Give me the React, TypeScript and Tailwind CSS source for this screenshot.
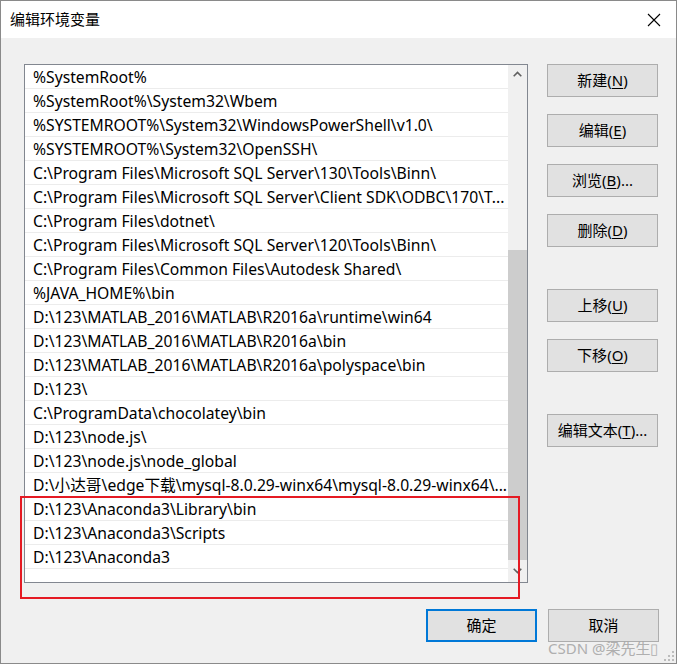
import React from "react";

// the two long entries are shown already shortened, as the dialog draws them
const paths = [
  "%SystemRoot%",
  "%SystemRoot%\\System32\\Wbem",
  "%SYSTEMROOT%\\System32\\WindowsPowerShell\\v1.0\\",
  "%SYSTEMROOT%\\System32\\OpenSSH\\",
  "C:\\Program Files\\Microsoft SQL Server\\130\\Tools\\Binn\\",
  "C:\\Program Files\\Microsoft SQL Server\\Client SDK\\ODBC\\170\\T...",
  "C:\\Program Files\\dotnet\\",
  "C:\\Program Files\\Microsoft SQL Server\\120\\Tools\\Binn\\",
  "C:\\Program Files\\Common Files\\Autodesk Shared\\",
  "%JAVA_HOME%\\bin",
  "D:\\123\\MATLAB_2016\\MATLAB\\R2016a\\runtime\\win64",
  "D:\\123\\MATLAB_2016\\MATLAB\\R2016a\\bin",
  "D:\\123\\MATLAB_2016\\MATLAB\\R2016a\\polyspace\\bin",
  "D:\\123\\",
  "C:\\ProgramData\\chocolatey\\bin",
  "D:\\123\\node.js\\",
  "D:\\123\\node.js\\node_global",
  "D:\\小达哥\\edge下载\\mysql-8.0.29-winx64\\mysql-8.0.29-winx64\\...",
  "D:\\123\\Anaconda3\\Library\\bin",
  "D:\\123\\Anaconda3\\Scripts",
  "D:\\123\\Anaconda3",
];

const font = "font-['Noto_Sans','Noto_Sans_CJK_SC',sans-serif]";

// label with one underlined access key, e.g. 新建(N)
const WinButton = ({
  label,
  hotkey,
  tail = "",
  primary = false,
}: {
  label: string;
  hotkey?: string;
  tail?: string;
  primary?: boolean;
}) => (
  <button
    className={
      "w-[111px] h-[33px] bg-[#e1e1e1] text-[15px] text-black flex items-center justify-center " +
      (primary ? "border-2 border-[#0078d7]" : "border border-[#adadad]")
    }
  >
    {label}
    {hotkey && (
      <>
        (<span className="underline underline-offset-2">{hotkey}</span>)
      </>
    )}
    {tail}
  </button>
);

export default function App() {
  return (
    <div
      className={`relative w-[677px] h-[664px] border border-[#8a8a8a] bg-[#f0f0f0] flex flex-col ${font}`}
    >
      {/* title bar */}
      <div className="h-[37px] bg-white flex items-center justify-between pl-[9px] pr-[15px] shrink-0">
        <span className="text-[15px] text-black">编辑环境变量</span>
        <svg width="14" height="14" viewBox="0 0 14 14">
          <path d="M1 1 L13 13 M13 1 L1 13" stroke="#000" strokeWidth="1.1" />
        </svg>
      </div>

      <div className="flex pl-[23px] pt-[26px] gap-[19px]">
        {/* path list */}
        <div className="w-[504px] h-[519px] border border-[#828790] bg-white flex">
          <div className="flex-1 min-w-0">
            {paths.map((p) => (
              <div
                key={p}
                className="h-[24px] border-b border-[#ececec] pl-[8px] pt-[1px] text-[15.7px] leading-[22px] text-black whitespace-nowrap overflow-hidden"
              >
                {p}
              </div>
            ))}
          </div>
          <div className="w-[19px] bg-[#f0f0f0] flex flex-col items-center">
            <div className="h-[18px] flex items-center justify-center">
              <svg width="9" height="6" viewBox="0 0 9 6">
                <path d="M0.7 5.3 L4.5 1.5 L8.3 5.3" stroke="#606060" strokeWidth="1.6" fill="none" />
              </svg>
            </div>
            <div className="h-[167px]" />
            <div className="w-full h-[310px] bg-[#cdcdcd]" />
            <div className="flex-1 flex items-center justify-center">
              <svg width="9" height="6" viewBox="0 0 9 6">
                <path d="M0.7 0.7 L4.5 4.5 L8.3 0.7" stroke="#606060" strokeWidth="1.6" fill="none" />
              </svg>
            </div>
          </div>
        </div>

        {/* right buttons */}
        <div className="flex flex-col">
          <div className="flex flex-col gap-[17px]">
            <WinButton label="新建" hotkey="N" />
            <WinButton label="编辑" hotkey="E" />
            <WinButton label="浏览" hotkey="B" tail="..." />
            <WinButton label="删除" hotkey="D" />
          </div>
          <div className="flex flex-col gap-[17px] mt-[42px]">
            <WinButton label="上移" hotkey="U" />
            <WinButton label="下移" hotkey="O" />
          </div>
          <div className="mt-[42px]">
            <WinButton label="编辑文本" hotkey="T" tail="..." />
          </div>
        </div>
      </div>

      {/* bottom buttons */}
      <div className="flex justify-end gap-[11px] pr-[17px] mt-[26px]">
        <WinButton label="确定" primary />
        <WinButton label="取消" />
      </div>

      {/* red annotation box */}
      <div className="absolute left-[19px] top-[495px] w-[500px] h-[103px] border-2 border-[#e51a23] pointer-events-none" />

      {/* watermark */}
      <div className="absolute left-[547px] top-[636px] text-[15px] text-[#a8a8a8] opacity-90 whitespace-nowrap">
        CSDN @梁先生▯
      </div>

      {/* resize grip */}
      <svg className="absolute right-[1px] bottom-[1px]" width="11" height="11" viewBox="0 0 11 11">
        {[
          [8, 0],
          [8, 4],
          [4, 4],
          [8, 8],
          [4, 8],
          [0, 8],
        ].map(([x, y]) => (
          <rect key={`${x}-${y}`} x={x} y={y} width="2" height="2" fill="#bcbcbc" />
        ))}
      </svg>
    </div>
  );
}
